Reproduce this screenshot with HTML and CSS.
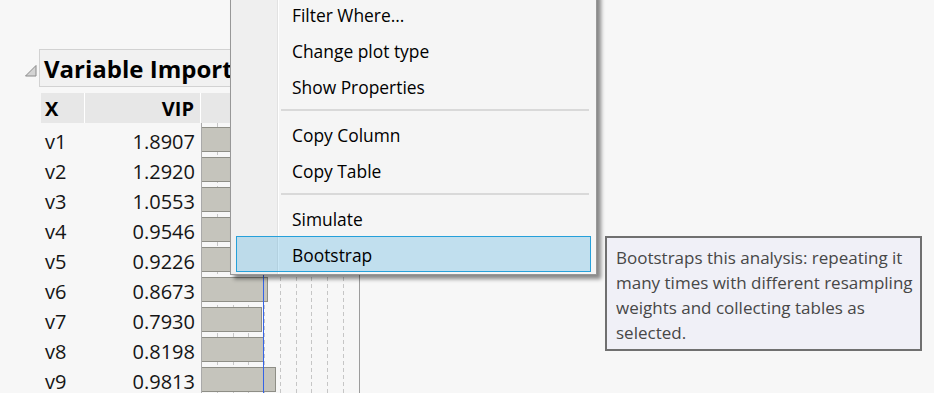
FILE: index.html
```html
<!DOCTYPE html>
<html lang="en">
    <head>
        <title>Variable Importance</title>
        <meta charset="UTF-8">
        <link rel="stylesheet" href="styles.css">
    </head>

    <body>
        <div class="report">
            <div class="outline">
                <svg class="disclosure" width="13" height="13" viewBox="0 0 13 13">
                    <path d="M12 1.5 L12 12 L1.5 12 Z" fill="#d3d3d3" stroke="#8a8a8a" stroke-width="1"/>
                </svg>
                <div class="outline-title">Variable Importance Plot</div>
            </div>

            <div class="vip-table">
                <div class="th th-x">X</div>
                <div class="th th-vip">VIP</div>
                <div class="th th-plot"></div>

                <div class="col-x">
                    <div class="cell">v1</div>
                    <div class="cell">v2</div>
                    <div class="cell">v3</div>
                    <div class="cell">v4</div>
                    <div class="cell">v5</div>
                    <div class="cell">v6</div>
                    <div class="cell">v7</div>
                    <div class="cell">v8</div>
                    <div class="cell">v9</div>
                </div>
                <div class="col-vip">
                    <div class="cell">1.8907</div>
                    <div class="cell">1.2920</div>
                    <div class="cell">1.0553</div>
                    <div class="cell">0.9546</div>
                    <div class="cell">0.9226</div>
                    <div class="cell">0.8673</div>
                    <div class="cell">0.7930</div>
                    <div class="cell">0.8198</div>
                    <div class="cell">0.9813</div>
                </div>
                <div class="col-plot">
                    <div class="gridlines">
                        <span></span><span></span><span></span><span></span><span></span>
                        <span></span><span></span><span></span><span></span>
                    </div>
                    <!-- bar width = VIP * 75.6px -->
                    <div class="bar" style="width: 142.9px"></div>
                    <div class="bar" style="width: 97.7px"></div>
                    <div class="bar" style="width: 79.8px"></div>
                    <div class="bar" style="width: 72.2px"></div>
                    <div class="bar" style="width: 69.7px"></div>
                    <div class="bar" style="width: 65.6px"></div>
                    <div class="bar" style="width: 60.0px"></div>
                    <div class="bar" style="width: 62.0px"></div>
                    <div class="bar" style="width: 74.2px"></div>
                    <div class="threshold"></div>
                </div>
            </div>
        </div>

        <div class="context-menu">
            <div class="menu-item">Filter Where...</div>
            <div class="menu-item">Change plot type</div>
            <div class="menu-item">Show Properties</div>
            <div class="menu-sep"></div>
            <div class="menu-item">Copy Column</div>
            <div class="menu-item">Copy Table</div>
            <div class="menu-sep"></div>
            <div class="menu-item">Simulate</div>
            <div class="menu-item active">Bootstrap</div>
        </div>

        <div class="tooltip">
            Bootstraps this analysis: repeating it<br>
            many times with different resampling<br>
            weights and collecting tables as<br>
            selected.
        </div>
    </body>
</html>
```

FILE: styles.css
```css
html, body {
    height: 393px;
    overflow: hidden;
}
body {
    margin: 0;
    background-color: #f7f7f7;
    font-family: "Open Sans", sans-serif;
    color: #151515;
}
.report {
    padding-top: 49px;
    padding-left: 24px;
}
.outline {
    display: flex;
    align-items: center;
}
.disclosure {
    margin-top: 5px;
    margin-right: 2px;
}
.outline-title {
    width: 400px;
    height: 38px;
    box-sizing: border-box;
    padding-left: 4px;
    display: flex;
    align-items: center;
    white-space: nowrap;
    overflow: hidden;
    background-color: #f1f1f1;
    border: 1px solid #d2d2d2;
    font-size: 24px;
    font-weight: bold;
    color: #000;
}

.vip-table {
    display: grid;
    grid-template-columns: 44px 116px 159px;
    margin-top: 6px;
    margin-left: 17px;
    font-size: 20px;
}
.th {
    height: 30px;
    line-height: 31px;
    background-color: #e7e7e7;
    border-right: 1px solid #fff;
    font-weight: bold;
    color: #000;
}
.th-x {
    padding-left: 4px;
}
.th-vip {
    text-align: right;
    padding-right: 6px;
}
.th-plot {
    border-right: 0;
}
.col-x,
.col-vip {
    padding-top: 4px;
}
.cell {
    height: 30px;
    line-height: 30px;
    white-space: nowrap;
}
.col-x .cell {
    padding-left: 4px;
}
.col-vip .cell {
    text-align: right;
    padding-right: 6px;
}

.col-plot {
    position: relative;
    height: 270px;
    padding-top: 4px;
    box-sizing: border-box;
    border-left: 1px solid #a9a9a9;
    border-right: 1px solid #9c9c9c;
    display: flex;
    flex-direction: column;
    gap: 5px;
    overflow: hidden;
}
.gridlines {
    position: absolute;
    top: 0;
    left: 0;
    bottom: 0;
    display: flex;
}
.gridlines span {
    width: 15.75px;
    background-image: repeating-linear-gradient(to bottom, #c6c6c6 0 4px, transparent 4px 7px);
    background-size: 1px 100%;
    background-position: right top;
    background-repeat: no-repeat;
}
.bar {
    position: relative;
    height: 25px;
    flex-shrink: 0;
    box-sizing: border-box;
    background-color: #c5c4bc;
    border: 1px solid #8e8e86;
    border-left: 0;
}
.threshold {
    position: absolute;
    top: 0;
    bottom: 0;
    left: 60.5px;
    width: 1px;
    background-color: #3563e6;
}

.context-menu {
    position: absolute;
    left: 230px;
    top: -8px;
    width: 367px;
    box-sizing: border-box;
    padding: 3px 0 2px;
    border: 1px solid #979797;
    background: linear-gradient(to right, #efefef 0 46px, #e2e2e2 46px 47px, #fff 47px 48px, #f5f5f5 48px);
    box-shadow: 4px 4px 4px rgba(0, 0, 0, 0.45);
    font-size: 17.4px;
    color: #000;
}
.menu-item {
    height: 36px;
    line-height: 36px;
    margin: 0 5px;
    padding-left: 55px;
    box-sizing: border-box;
    border: 1px solid transparent;
    white-space: nowrap;
}
.menu-item.active {
    border-color: #26a0da;
    background-color: rgba(38, 160, 218, 0.25);
}
.menu-sep {
    height: 12px;
    padding-top: 5px;
    box-sizing: border-box;
}
.menu-sep::after {
    content: "";
    display: block;
    height: 2px;
    margin: 0 7px 0 50px;
    background-color: #d9d9d9;
}

.tooltip {
    position: absolute;
    left: 605px;
    top: 236px;
    width: 317px;
    height: 115px;
    box-sizing: border-box;
    padding: 7px 9px;
    border: 2px solid #707070;
    background-color: #f0f0f7;
    font-size: 17px;
    line-height: 25px;
    color: #474747;
    white-space: nowrap;
}
```
